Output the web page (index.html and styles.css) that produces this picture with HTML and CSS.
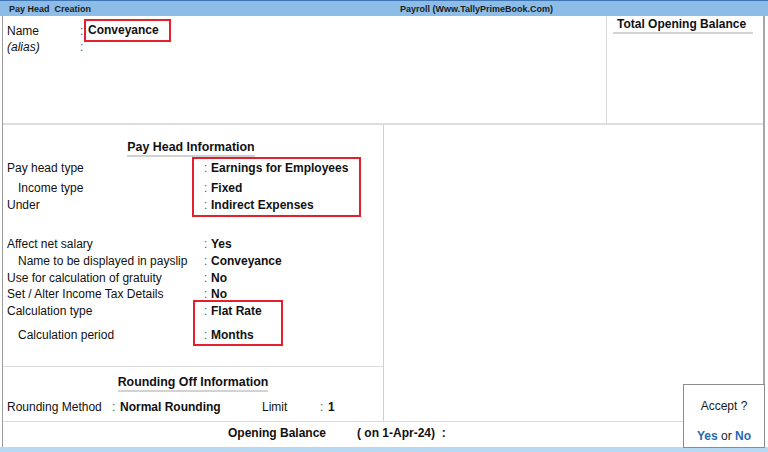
FILE: index.html
```html
<!DOCTYPE html>
<html lang="en">
<head>
<meta charset="UTF-8">
<title>Pay Head Creation</title>
<link rel="stylesheet" href="styles.css">
</head>
<body>

<div class="screen">
    <div class="titlebar">
        <span class="title">Pay Head&nbsp; Creation</span>
        <span class="company">Payroll (Www.TallyPrimeBook.Com)</span>
    </div>

    <div class="frame">
        <div class="header">
            <div class="master">
                <div class="field name-field">
                    <span class="label">Name</span>
                    <span class="colon">:</span>
                    <span class="name-value">Conveyance</span>
                </div>
                <div class="field alias-field">
                    <span class="label alias">(alias)</span>
                    <span class="colon">:</span>
                </div>
            </div>
            <div class="balance-panel">
                <div class="balance-title">Total Opening Balance</div>
            </div>
        </div>

        <div class="body">
            <div class="left-panel">
                <div class="info">
                    <div class="section-title"><span>Pay Head Information</span></div>

                    <div class="group mark-type">
                        <div class="row"><span class="label">Pay head type</span><span class="colon">:</span><span class="value">Earnings for Employees</span></div>
                        <div class="row gap-3"><span class="label sub">Income type</span><span class="colon">:</span><span class="value">Fixed</span></div>
                        <div class="row"><span class="label">Under</span><span class="colon">:</span><span class="value">Indirect Expenses</span></div>
                    </div>

                    <div class="group gap-22">
                        <div class="row"><span class="label">Affect net salary</span><span class="colon">:</span><span class="value">Yes</span></div>
                        <div class="row"><span class="label sub">Name to be displayed in payslip</span><span class="colon">:</span><span class="value">Conveyance</span></div>
                        <div class="row"><span class="label">Use for calculation of gratuity</span><span class="colon">:</span><span class="value">No</span></div>
                        <div class="row short"><span class="label">Set / Alter Income Tax Details</span><span class="colon">:</span><span class="value">No</span></div>
                    </div>

                    <div class="group mark-calc">
                        <div class="row"><span class="label">Calculation type</span><span class="colon">:</span><span class="value">Flat Rate</span></div>
                        <div class="row gap-7"><span class="label sub">Calculation period</span><span class="colon">:</span><span class="value">Months</span></div>
                    </div>
                </div>

                <div class="rounding">
                    <div class="section-title small"><span>Rounding Off Information</span></div>
                    <div class="round-row">
                        <span class="round-label">Rounding Method</span>
                        <span class="colon">:</span>
                        <span class="value round-method">Normal Rounding</span>
                        <span class="round-label limit">Limit</span>
                        <span class="colon">:</span>
                        <span class="value">1</span>
                    </div>
                </div>
            </div>
            <div class="right-panel"></div>
        </div>

        <div class="opening">
            <span class="opening-label">Opening Balance</span>
            <span class="opening-date">( on 1-Apr-24)&nbsp; :</span>
        </div>
    </div>

    <div class="statusbar"></div>

    <div class="accept">
        <div class="accept-q">Accept ?</div>
        <div class="accept-a"><span class="yn">Yes</span> or <span class="yn">No</span></div>
    </div>
</div>

</body>
</html>
```

FILE: styles.css
```css
body {
    margin: 0;
    padding: 0;
    background-color: #ffffff;
    font-family: "Liberation Sans", Arial, sans-serif;
    font-size: 12px;
    color: #111111;
}

.screen {
    position: relative;
    width: 768px;
    height: 452px;
    overflow: hidden;
    display: flex;
    flex-direction: column;
}

/* title bar */
.titlebar {
    height: 15px;
    border-top: 1px solid #3f74b5;
    background-color: #8dbde6;
    display: flex;
    align-items: center;
    font-size: 9px;
    font-weight: bold;
    color: #1c1c1c;
}

.titlebar .title {
    padding-left: 9px;
    width: 391px;
}

/* main frame */
.frame {
    margin-left: 2px;
    width: 760px;
    height: 431px;
    border-left: 1px solid #9c9c9c;
    border-right: 2px solid #a3a7ab;
    display: flex;
    flex-direction: column;
}

.header {
    height: 107px;
    border-bottom: 2px solid #dedede;
    display: flex;
}

.master {
    flex: 1;
    padding: 3px 0 0 4px;
}

.field {
    display: flex;
    align-items: center;
}

.field .label {
    width: 73px;
}

.name-field {
    height: 23px;
}

.alias-field {
    height: 17px;
    margin-top: -4px;
}

.alias {
    font-style: italic;
}

.colon {
    color: #555555;
    width: 4px;
}

.name-value {
    font-weight: bold;
    line-height: 19px;
    border: 2px solid #e3202b;
    padding: 0 10px 0 2px;
}

.balance-panel {
    width: 140px;
    border-left: 1px solid #d8d8d8;
    padding: 1px 10px 0 6px;
}

.balance-title {
    font-weight: bold;
    line-height: 15px;
    padding-left: 4px;
    border-bottom: 2px solid #d4d4d4;
}

/* body */
.body {
    height: 296px;
    display: flex;
}

.left-panel {
    width: 380px;
    border-right: 1px solid #d0d0d0;
    display: flex;
    flex-direction: column;
}

.info {
    height: 241px;
    border-bottom: 1px solid #dcdcdc;
    padding-left: 4px;
}

.section-title {
    text-align: center;
    padding-top: 14px;
    padding-right: 8px;
    margin-bottom: 2px;
    font-weight: bold;
    font-size: 12.4px;
}

.section-title span {
    display: inline-block;
    line-height: 16px;
    border-bottom: 2px solid #d2d2d2;
}

.section-title.small {
    padding-top: 7px;
    padding-right: 4px;
    margin-bottom: 6px;
}

.group {
    position: relative;
}

.row {
    display: flex;
    align-items: center;
    height: 17px;
}

.row.short {
    height: 16px;
}

.row .label {
    width: 197px;
}

.row .colon {
    width: 7px;
}

.label.sub {
    padding-left: 11px;
    width: 186px;
}

.value {
    font-weight: bold;
}

.gap-3 {
    margin-top: 3px;
}

.gap-7 {
    margin-top: 7px;
}

.gap-22 {
    margin-top: 22px;
}

/* red highlight boxes drawn over the fields */
.mark-type::after,
.mark-calc::after {
    content: "";
    position: absolute;
    border: 2px solid #e3202b;
    top: -2px;
    bottom: -4px;
}

.mark-type::after {
    left: 185px;
    width: 165px;
}

.mark-calc::after {
    left: 186px;
    width: 86px;
    bottom: -3px;
}

.rounding {
    flex: 1;
    padding-left: 4px;
}

.round-row {
    display: flex;
    align-items: center;
    height: 17px;
}

.round-label {
    width: 105px;
}

.round-row .colon {
    width: 8px;
}

.round-method {
    width: 142px;
}

.round-label.limit {
    width: 58px;
}

.right-panel {
    flex: 1;
}

.opening {
    flex: 1;
    border-top: 1px solid #dcdcdc;
    display: flex;
    align-items: center;
    padding-bottom: 3px;
    font-weight: bold;
}

.opening-label {
    padding-left: 225px;
    width: 129px;
}

.statusbar {
    height: 5px;
    background-color: #b7d9f3;
}

/* accept dialog floats over the corner */
.accept {
    position: absolute;
    left: 683px;
    top: 384px;
    width: 80px;
    height: 62px;
    border: 1px solid #8c8c8c;
    background-color: #ffffff;
    text-align: center;
}

.accept-q {
    margin-top: 14px;
    color: #1a1a1a;
}

.accept-a {
    margin-top: 16px;
    color: #222222;
}

.yn {
    color: #2a68b2;
    font-weight: bold;
}
```
